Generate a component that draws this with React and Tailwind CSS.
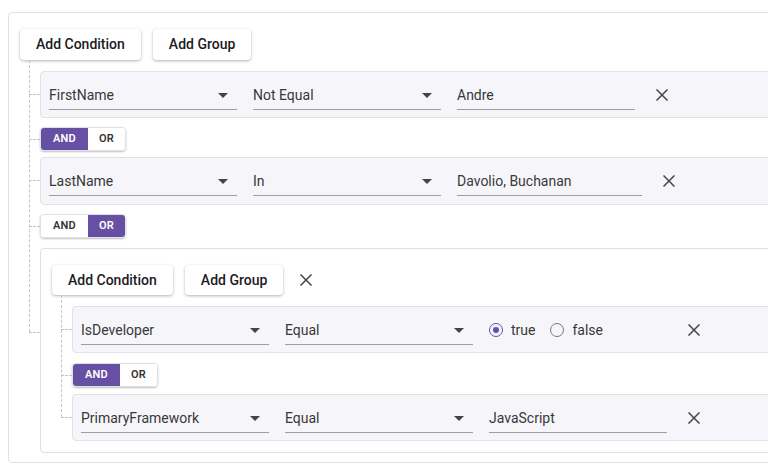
import React from 'react'

const FONT = { fontFamily: 'Roboto, "Noto Sans", sans-serif' }

function CloseIcon({ className = '' }) {
  return (
    <svg width="12" height="12" viewBox="0 0 12 12" className={className}>
      <path d="M0.5 0.5 L11.5 11.5 M11.5 0.5 L0.5 11.5" stroke="#444" strokeWidth="1.5" fill="none" />
    </svg>
  )
}

function Caret() {
  return (
    <svg width="10" height="5" viewBox="0 0 10 5">
      <path d="M0 0 L10 0 L5 5 Z" fill="#444" />
    </svg>
  )
}

function ActionButton({ label }) {
  return (
    <button className="h-[31px] px-4 rounded-[4px] bg-white text-[14px] font-medium text-[#1c1b1f] shadow-[0_1px_3px_rgba(0,0,0,0.3)]">
      {label}
    </button>
  )
}

function Select({ value }) {
  return (
    <div className="w-[188px] mt-[13px] h-[25px] border-b border-[#9e9e9e] flex items-start justify-between pr-[9px]">
      <span className="leading-5 text-[14px] text-[#383838]">{value}</span>
      <span className="h-5 flex items-center"><Caret /></span>
    </div>
  )
}

function HDash({ top }) {
  return (
    <div
      className={`absolute left-[-11px] w-[11px] border-t border-dashed border-[#c4c4c4] ${top}`}
    />
  )
}

function Rule({ field, op, value, valueWidth = 'w-[178px]', radio = false, tall = false }) {
  return (
    <div className="relative">
      <HDash top="top-[23px]" />
      <div className={`${tall ? 'h-[48px]' : 'h-[47px]'} rounded-[4px] border border-[#e2e2e6] bg-[#f6f6fa] pl-[8px] flex items-start gap-4`}>
        <Select value={field} />
        <Select value={op} />
        {radio ? (
          <div className={`${valueWidth} mt-[13px] h-5 flex items-center text-[14px] text-[#383838]`}>
            <span className="w-[14px] h-[14px] rounded-full border-[1.5px] border-[#6750a4] flex items-center justify-center">
              <span className="w-[6px] h-[6px] rounded-full bg-[#6750a4]" />
            </span>
            <span className="ml-[8px]">true</span>
            <span className="ml-[15px] w-[14px] h-[14px] rounded-full border-[1.5px] border-[#777]" />
            <span className="ml-[8px]">false</span>
          </div>
        ) : (
          <div className={`${valueWidth} mt-[13px] h-[25px] border-b border-[#9e9e9e] flex items-start`}>
            <span className="leading-5 text-[14px] text-[#383838]">{value}</span>
          </div>
        )}
        <div className="mt-[13px] h-5 flex items-center ml-[5px]">
          <CloseIcon />
        </div>
      </div>
    </div>
  )
}

function Toggle({ active }) {
  const on = 'bg-[#6750a4] text-white'
  const off = 'bg-white text-[#333]'
  return (
    <div className="relative">
      <HDash top="top-[12px]" />
      <div className="h-[24px] w-[86px] flex rounded-[4px] overflow-hidden border border-[#e0e0e0] shadow-[0_1px_2px_rgba(0,0,0,0.25)] text-[11px] font-semibold tracking-[0.02em]">
        <div className={`w-[47px] flex items-center justify-center ${active === 'AND' ? on : off}`}>AND</div>
        <div className={`flex-1 flex items-center justify-center ${active === 'OR' ? on : off}`}>OR</div>
      </div>
    </div>
  )
}

export default function App() {
  return (
    <div className="w-[768px] h-[464px] overflow-hidden bg-white" style={FONT}>
      <div className="ml-[8px] mt-[12px] w-[820px] border border-[#e0e0e0] rounded-[4px] pl-[11px] pt-[16px] pb-[9px]">
        <div className="flex gap-3">
          <ActionButton label="Add Condition" />
          <ActionButton label="Add Group" />
        </div>

        <div className="relative ml-[20px]">
          <div className="absolute left-[-11px] top-0 h-[272px] border-l border-dashed border-[#c4c4c4]" />

          <div className="pt-[11px]">
            <Rule field="FirstName" op="Not Equal" value="Andre" />
          </div>
          <div className="mt-[9px]">
            <Toggle active="AND" />
          </div>
          <div className="mt-[6px]">
            <Rule field="LastName" op="In" value="Davolio, Buchanan" valueWidth="w-[185px]" tall />
          </div>
          <div className="mt-[9px]">
            <Toggle active="OR" />
          </div>

          {/* nested group */}
          <div className="relative mt-[10px]">
            <HDash top="top-[84px]" />
            <div className="border border-[#e0e0e0] rounded-[4px] pl-[11px] pt-[16px] pb-[11px]">
              <div className="flex items-center gap-3">
                <button className="h-[30px] px-4 rounded-[4px] bg-white text-[14px] font-medium text-[#1c1b1f] shadow-[0_1px_3px_rgba(0,0,0,0.3)]">
                  Add Condition
                </button>
                <button className="h-[30px] px-4 rounded-[4px] bg-white text-[14px] font-medium text-[#1c1b1f] shadow-[0_1px_3px_rgba(0,0,0,0.3)]">
                  Add Group
                </button>
                <CloseIcon className="ml-[5px]" />
              </div>

              <div className="relative ml-[20px]">
                <div className="absolute left-[-11px] top-0 h-[122px] border-l border-dashed border-[#c4c4c4]" />
                <div className="pt-[11px]">
                  <Rule field="IsDeveloper" op="Equal" radio />
                </div>
                <div className="mt-[10px]">
                  <Toggle active="AND" />
                </div>
                <div className="mt-[7px]">
                  <Rule field="PrimaryFramework" op="Equal" value="JavaScript" />
                </div>
              </div>
            </div>
          </div>
        </div>
      </div>
    </div>
  )
}
